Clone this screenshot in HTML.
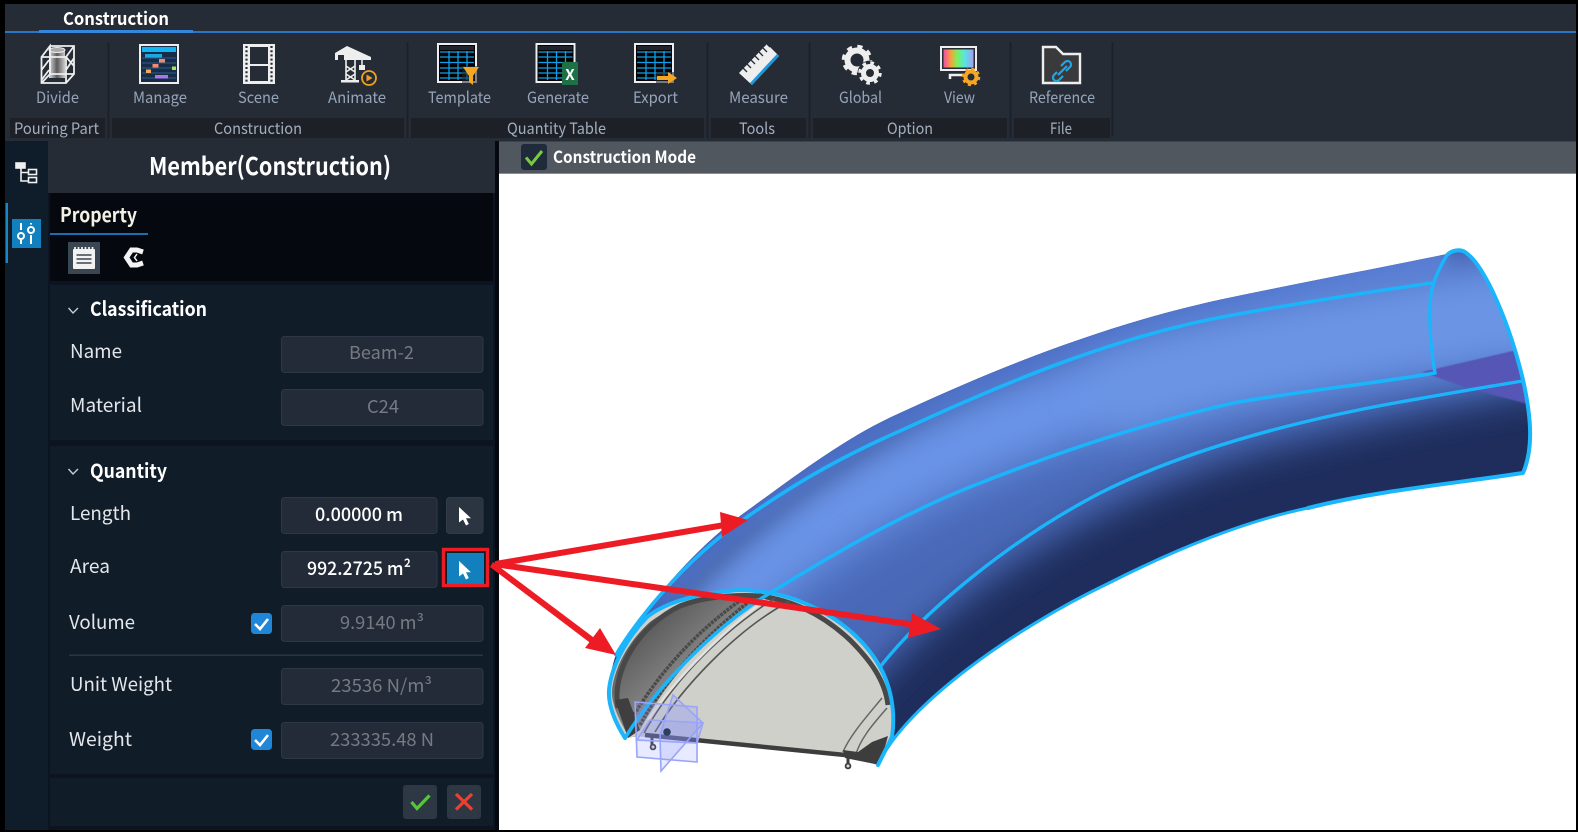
<!DOCTYPE html>
<html><head><meta charset="utf-8"><style>
html,body{margin:0;padding:0;background:#000;width:1578px;height:832px;overflow:hidden}
svg{position:absolute;left:0;top:0;filter:blur(.3px)}
text{font-family:"Noto Sans CJK JP","Liberation Sans",sans-serif}
.rb{font-size:15.5px;fill:#96a5ba;text-anchor:middle}
.gp{font-size:15.5px;fill:#a3afc0;text-anchor:middle}
.h{font-size:19.5px;font-weight:700;fill:#fff}
.l{font-size:19px;fill:#e3e6ea}
.v{font-size:18px;fill:#767b83;text-anchor:middle}
.w{font-size:18.5px;fill:#fff;text-anchor:middle;font-weight:500}
.ip{fill:#232b38;stroke:#2e3745}
.cy{fill:none;stroke:#1bb5fb;stroke-linecap:round;stroke-linejoin:round}
</style></head><body>
<svg width="1578" height="832" viewBox="0 0 1578 832" xmlns="http://www.w3.org/2000/svg">
<defs>
<linearGradient id="lg" x1="0" y1="0" x2="1" y2="1"><stop offset="0" stop-color="#3a3a3a"/><stop offset=".55" stop-color="#8a8a8a"/><stop offset="1" stop-color="#c4c4c2"/></linearGradient>
<linearGradient id="rain" x1="0" x2="1" y1="0" y2="0"><stop offset="0" stop-color="#f04fa0"/><stop offset=".25" stop-color="#f6a13c"/><stop offset=".45" stop-color="#7df05a"/><stop offset=".7" stop-color="#55e6e0"/><stop offset="1" stop-color="#a79cf5"/></linearGradient>
<linearGradient id="cyl" x1="0" x2="1" y1="0" y2="0"><stop offset="0" stop-color="#ddd"/><stop offset=".5" stop-color="#5a5a5a"/><stop offset="1" stop-color="#ccc"/></linearGradient>
<linearGradient id="topg" gradientUnits="userSpaceOnUse" x1="620" y1="0" x2="1450" y2="0"><stop offset="0" stop-color="#3a5ab0"/><stop offset="1" stop-color="#5579d0"/></linearGradient>
<filter id="b1" filterUnits="userSpaceOnUse" x="480" y="150" width="1098" height="700"><feGaussianBlur stdDeviation="18"/></filter>
<filter id="b2" filterUnits="userSpaceOnUse" x="480" y="150" width="1098" height="700"><feGaussianBlur stdDeviation="22"/></filter>
<filter id="b4" filterUnits="userSpaceOnUse" x="480" y="150" width="1098" height="700"><feGaussianBlur stdDeviation="7"/></filter>
<filter id="b3" filterUnits="userSpaceOnUse" x="1300" y="300" width="278" height="160"><feGaussianBlur stdDeviation=".6"/></filter>
<clipPath id="tube"><path d="M625 738C615 722 608 705 609 690C610 678 612 665 616 655C630 630 680 560 740 516C790 480 845 437 900 413C1010 362 1120 320 1233 297C1300 283 1380 268 1447 254C1452 250 1460 249 1465 252C1485 265 1510 325 1523 380C1532 420 1533 450 1523 473C1450 484 1375 491 1308 508C1240 522 1170 552 1107 584C1015 628 905 705 878 765L850 757L640 736Z"/></clipPath>
<g id="tbl">
<rect x="1" y="1" width="38" height="38" fill="#000" stroke="#eee" stroke-width="2"/>
<rect x="3" y="3" width="34" height="4" fill="#20242c"/>
<path d="M3 9H37M3 14H37M3 19.500H37M3 25H37M3 30H37M3 35H37M12 8V37M21 8V37M30 8V37" stroke="#0f9fe8" stroke-width="1.300" fill="none"/>
</g>
<path id="cur" d="M0 0V15.500L4 12.500L7 18.500L9.800 17L7 11.200H12Z" fill="#fff"/>
<path id="chk" d="M0 5L5 10L13 0" fill="none" stroke="#fff" stroke-width="2.600"/>
</defs>

<!-- frame -->
<rect x="5" y="4" width="1571" height="826" fill="#0b1420"/>
<!-- ribbon -->
<rect x="5" y="4" width="1571" height="137" fill="#262c36"/>
<rect x="5" y="31" width="1571" height="2" fill="#2b76c4"/>
<rect x="39" y="30" width="154" height="3" fill="#3388dd"/>
<text x="63" y="25" class="h" style="font-size:17.500px" textLength="106" lengthAdjust="spacingAndGlyphs">Construction</text>

<g fill="#1d2027">
<rect x="10" y="118" width="95" height="20"/><rect x="112" y="118" width="292" height="20"/><rect x="411" y="118" width="293" height="20"/><rect x="711" y="118" width="95" height="20"/><rect x="813" y="118" width="194" height="20"/><rect x="1014" y="118" width="96" height="20"/>
</g>
<g fill="#1c2028">
<rect x="107.500" y="42" width="2" height="96"/><rect x="406.500" y="42" width="2" height="96"/><rect x="706.500" y="42" width="2" height="96"/><rect x="808.500" y="42" width="2" height="96"/><rect x="1009.500" y="42" width="2" height="96"/><rect x="1111.500" y="42" width="2" height="94"/>
</g>

<!-- ribbon labels -->
<text x="57.500" y="103" class="rb" textLength="43" lengthAdjust="spacingAndGlyphs">Divide</text>
<text x="160" y="103" class="rb" textLength="54" lengthAdjust="spacingAndGlyphs">Manage</text>
<text x="258.500" y="103" class="rb" textLength="41" lengthAdjust="spacingAndGlyphs">Scene</text>
<text x="357" y="103" class="rb" textLength="58" lengthAdjust="spacingAndGlyphs">Animate</text>
<text x="459.500" y="103" class="rb" textLength="63" lengthAdjust="spacingAndGlyphs">Template</text>
<text x="558" y="103" class="rb" textLength="62" lengthAdjust="spacingAndGlyphs">Generate</text>
<text x="655.500" y="103" class="rb" textLength="45" lengthAdjust="spacingAndGlyphs">Export</text>
<text x="758.500" y="103" class="rb" textLength="59" lengthAdjust="spacingAndGlyphs">Measure</text>
<text x="860.500" y="103" class="rb" textLength="43" lengthAdjust="spacingAndGlyphs">Global</text>
<text x="959.500" y="103" class="rb" textLength="31" lengthAdjust="spacingAndGlyphs">View</text>
<text x="1062" y="103" class="rb" textLength="66" lengthAdjust="spacingAndGlyphs">Reference</text>
<text x="56.500" y="134" class="gp" textLength="85" lengthAdjust="spacingAndGlyphs">Pouring Part</text>
<text x="258" y="134" class="gp" textLength="88" lengthAdjust="spacingAndGlyphs">Construction</text>
<text x="556.500" y="134" class="gp" textLength="99" lengthAdjust="spacingAndGlyphs">Quantity Table</text>
<text x="757" y="134" class="gp" textLength="36" lengthAdjust="spacingAndGlyphs">Tools</text>
<text x="910" y="134" class="gp" textLength="46" lengthAdjust="spacingAndGlyphs">Option</text>
<text x="1061" y="134" class="gp" textLength="22" lengthAdjust="spacingAndGlyphs">File</text>

<!-- Divide icon -->
<g>
<rect x="49" y="50" width="16" height="28" fill="url(#cyl)"/>
<ellipse cx="57" cy="50" rx="8" ry="2.500" fill="#aaa" stroke="#eee"/>
<path d="M41.500 57L50 46H74V74L66 83H41.500ZM41.500 57H66V83M66 57L74 46M41.500 57L50 46V74H74M50 74L41.500 83M66 57L74 66M66 70L74 58M41.500 70L49 60M41.500 80L49 70" fill="none" stroke="#eee" stroke-width="1.800"/>
</g>
<!-- Manage -->
<g>
<rect x="140" y="45" width="38" height="38" fill="#192c47" stroke="#eee" stroke-width="2"/>
<rect x="142" y="47" width="34" height="5" fill="#12b4f2"/>
<path d="M142 58H176M142 63H176M142 68H176M142 73H176M142 78H176" stroke="#2c5c8a" stroke-width="1"/>
<rect x="145" y="54" width="17" height="3.500" fill="#1ba8e0"/>
<rect x="159" y="59" width="6" height="3.500" fill="#f08a70"/>
<rect x="152.500" y="64" width="6" height="3.500" fill="#f08a70"/>
<rect x="146" y="69.500" width="5" height="3.500" fill="#f3a95a"/>
<rect x="172" y="66.500" width="4" height="3.500" fill="#9ce660"/>
<rect x="155" y="75" width="13" height="3.500" fill="#a878ea"/>
</g>
<!-- Scene -->
<g>
<rect x="243" y="44" width="32" height="40" fill="#eee"/>
<rect x="250" y="47" width="18" height="17" fill="#262c36"/><rect x="250" y="66" width="18" height="15" fill="#262c36"/>
<path d="M246.500 46V83M271.500 46V83" stroke="#262c36" stroke-width="2.200" stroke-dasharray="2 2.200" fill="none"/>
</g>
<!-- Animate -->
<g fill="none" stroke="#eee">
<path d="M335 61V53L347 46L371 57V60H335Z" fill="#eee" stroke="none"/>
<path d="M338 60V55H344V60" fill="#262c36" stroke="none"/>
<path d="M346 60V81M355 60V81M346 66L355 72M355 66L346 72M346 74L355 80M355 74L346 80" stroke-width="1.600"/>
<rect x="341" y="80" width="18" height="2.500" fill="#eee" stroke="none"/>
<path d="M362 60V66" stroke-width="1.500"/><rect x="359" y="65" width="6" height="5" fill="#eee" stroke="none"/>
<circle cx="369" cy="78" r="7" stroke="#f0a020" stroke-width="1.800" fill="#262c36"/>
<path d="M366.500 74.500V81.500L372.500 78Z" fill="#f0a020" stroke="none"/>
</g>
<!-- tables -->
<use href="#tbl" x="437" y="43"/>
<rect x="462" y="66" width="16" height="19" fill="#262c36" opacity=".55"/>
<path d="M463 67H479L473 76V85L469 82V76Z" fill="#f5a623"/>
<use href="#tbl" x="535.500" y="43"/>
<rect x="562" y="62" width="16" height="23" fill="#1e7145"/>
<text x="570" y="80" text-anchor="middle" font-size="15" font-weight="700" fill="#fff">X</text>
<use href="#tbl" x="634" y="43"/>
<rect x="656" y="72" width="18" height="12" fill="#262c36" opacity=".6"/>
<path d="M657 76H668V72L677 78L668 84V80H657Z" fill="#f5a623"/>
<!-- Measure -->
<g>
<path d="M767 44L779 56L752 85L739 73Z" fill="#eee"/>
<path d="M779 56L752 85L750 83L777 54Z" fill="#1a98e0"/>
<path d="M763 48L767 52M759 52L763 56M755 56L759 60M751 60L755 64M747 64L751 68M743 68L747 72M767 44L770 47" stroke="#262c36" stroke-width="1.300"/>
</g>
<!-- Global -->
<g fill="none">
<circle cx="857" cy="60" r="9.500" stroke="#eee" stroke-width="6"/>
<circle cx="857" cy="60" r="13" stroke="#eee" stroke-width="4.500" stroke-dasharray="5 5.200"/>
<circle cx="870" cy="73" r="12.500" fill="#262c36"/>
<circle cx="870" cy="73" r="6.500" stroke="#eee" stroke-width="5"/>
<circle cx="870" cy="73" r="10" stroke="#eee" stroke-width="3.500" stroke-dasharray="3.600 4.250"/>
</g>
<!-- View -->
<g>
<rect x="941" y="47" width="35" height="23" fill="#262c36" stroke="#eee" stroke-width="2"/>
<rect x="943.500" y="49.500" width="30" height="18" fill="url(#rain)"/>
<path d="M950 79V75H964" fill="none" stroke="#eee" stroke-width="2.500"/>
<circle cx="971" cy="77" r="5.500" fill="none" stroke="#f5a623" stroke-width="4"/>
<circle cx="971" cy="77" r="8" fill="none" stroke="#f5a623" stroke-width="2.500" stroke-dasharray="3 3.300"/>
</g>
<!-- Reference -->
<g>
<path d="M1043 47H1056L1063 54H1080V83H1043Z" fill="#3a3a3c" stroke="#eee" stroke-width="2.400"/>
<path d="M1057 72L1054 75A3.500 3.500 0 0 0 1059 80L1063 76M1061 66L1065 62A3.500 3.500 0 0 1 1070 67L1066 71M1058 75L1067 66" fill="none" stroke="#1ba8ea" stroke-width="2.200"/>
</g>

<!-- left rail -->
<rect x="5" y="141" width="43" height="689" fill="#0f1c29"/>
<g fill="none" stroke="#f0f0f0" stroke-width="1.600">
<rect x="16" y="163" width="9" height="5" fill="#f0f0f0"/>
<path d="M21 168V181H28M21 172.500H28"/>
<rect x="28.500" y="169.500" width="8" height="5"/><rect x="28.500" y="177.500" width="8" height="5"/>
</g>
<rect x="5.500" y="203" width="2.500" height="60" fill="#1a86c7"/>
<rect x="12" y="219" width="29" height="29" fill="#1280bd"/>
<g fill="none" stroke="#fff" stroke-width="2">
<path d="M21 223V230M21 240V244M31 223V224.500M31 235V244"/>
<circle cx="21" cy="236" r="3"/><circle cx="31" cy="230" r="3"/>
</g>

<!-- panel header -->
<rect x="48" y="141" width="447" height="52" fill="#262c36"/>
<text x="149" y="175" class="h" style="font-size:24.500px" textLength="242" lengthAdjust="spacingAndGlyphs">Member(Construction)</text>
<rect x="48" y="193" width="451" height="637" fill="#0b1420"/>
<rect x="495" y="141" width="4" height="689" fill="#05090f"/>
<rect x="50" y="193" width="443" height="88" fill="#05090f"/>
<text x="60" y="222" class="h" style="font-size:20px;fill:#f4f0e4" textLength="77" lengthAdjust="spacingAndGlyphs">Property</text>
<rect x="50" y="233" width="98" height="2" fill="#1a6fb0"/>
<rect x="68" y="242" width="32" height="32" fill="#3a4652"/>
<rect x="73" y="249" width="22" height="20" rx="1" fill="#f2f2f2"/>
<path d="M75 247V250M78.500 247V250M82 247V250M85.500 247V250M89 247V250M92.500 247V250" stroke="#f2f2f2" stroke-width="1.700"/>
<path d="M76.500 255H91.500M76.500 259H91.500M76.500 263H91.500" stroke="#3a4652" stroke-width="1.600"/>
<path d="M143 252L137 250H131.500L126.500 257.500L131.500 265H137L143 263" fill="none" stroke="#f4f4f4" stroke-width="5"/>
<path d="M137 254L134.500 257.500L137 261" fill="none" stroke="#f4f4f4" stroke-width="1.500"/>

<!-- Classification -->
<rect x="50" y="285" width="443" height="155" fill="#111c29"/>
<path d="M68.500 308L73 313L78 308" fill="none" stroke="#c8ccd2" stroke-width="1.400"/>
<text x="90" y="316" class="h" textLength="117" lengthAdjust="spacingAndGlyphs">Classification</text>
<text x="70" y="358" class="l" textLength="52" lengthAdjust="spacingAndGlyphs">Name</text>
<rect x="281.500" y="336.500" width="201.500" height="36" rx="3" class="ip"/>
<text x="381.500" y="359" class="v" textLength="65" lengthAdjust="spacingAndGlyphs">Beam-2</text>
<text x="70" y="412" class="l" textLength="72" lengthAdjust="spacingAndGlyphs">Material</text>
<rect x="281.500" y="389.500" width="201.500" height="36" rx="3" class="ip"/>
<text x="383" y="413" class="v" textLength="32" lengthAdjust="spacingAndGlyphs">C24</text>

<!-- Quantity -->
<rect x="50" y="446" width="443" height="328" fill="#111c29"/>
<path d="M68.500 469L73 474L78 469" fill="none" stroke="#c8ccd2" stroke-width="1.400"/>
<text x="90" y="478" class="h" textLength="77" lengthAdjust="spacingAndGlyphs">Quantity</text>
<text x="70" y="520" class="l" textLength="61" lengthAdjust="spacingAndGlyphs">Length</text>
<rect x="281.500" y="497.500" width="155.500" height="36" rx="3" class="ip"/>
<text x="359" y="521" class="w" textLength="88" lengthAdjust="spacingAndGlyphs">0.00000 m</text>
<rect x="446.500" y="497.500" width="36.500" height="36" rx="3" fill="#2b3441" stroke="#323b48"/>
<use href="#cur" x="459" y="507"/>
<text x="70" y="573" class="l" textLength="40" lengthAdjust="spacingAndGlyphs">Area</text>
<rect x="281.500" y="551.500" width="155.500" height="36" rx="3" class="ip"/>
<text x="359" y="575" class="w" textLength="104" lengthAdjust="spacingAndGlyphs">992.2725 m²</text>
<rect x="447" y="553" width="37" height="31" fill="#1280bd"/>
<use href="#cur" x="459" y="561"/>
<text x="69" y="629" class="l" textLength="66" lengthAdjust="spacingAndGlyphs">Volume</text>
<rect x="251" y="613" width="21" height="21" rx="3.500" fill="#1f86d8"/>
<use href="#chk" x="255" y="619"/>
<rect x="281.500" y="605.500" width="201.500" height="36" rx="3" class="ip"/>
<text x="382" y="629" class="v" textLength="84" lengthAdjust="spacingAndGlyphs">9.9140 m³</text>
<rect x="69" y="654.500" width="414" height="1.500" fill="#2b3645"/>
<text x="70" y="691" class="l" textLength="102" lengthAdjust="spacingAndGlyphs">Unit Weight</text>
<rect x="281.500" y="668.500" width="201.500" height="36" rx="3" class="ip"/>
<text x="381.500" y="692" class="v" textLength="101" lengthAdjust="spacingAndGlyphs">23536 N/m³</text>
<text x="69" y="746" class="l" textLength="63" lengthAdjust="spacingAndGlyphs">Weight</text>
<rect x="251" y="729" width="21" height="21" rx="3.500" fill="#1f86d8"/>
<use href="#chk" x="255" y="735"/>
<rect x="281.500" y="722.500" width="201.500" height="36" rx="3" class="ip"/>
<text x="382" y="746" class="v" textLength="104" lengthAdjust="spacingAndGlyphs">233335.48 N</text>

<!-- footer -->
<rect x="50" y="778" width="443" height="48" fill="#111c29"/>
<rect x="403" y="785" width="34" height="34" rx="3" fill="#2e3845"/>
<path d="M411.500 802L417 808.500L429.500 795.500" fill="none" stroke="#55c838" stroke-width="3.200"/>
<rect x="447" y="785" width="34" height="34" rx="3" fill="#2e3845"/>
<path d="M456 794L472 809.500M472 794L456 809.500" fill="none" stroke="#ee4030" stroke-width="3.200"/>

<!-- viewport -->
<rect x="499" y="141" width="1077" height="33" fill="#50575f"/>
<rect x="499" y="141" width="1077" height="1" fill="#3d434b"/>
<rect x="499" y="173" width="1077" height="1" fill="#8a8e94"/>
<rect x="499" y="174" width="1077" height="656" fill="#fff"/>
<rect x="521" y="144" width="26" height="26" rx="3" fill="#1f2a3a"/>
<path d="M526 157.500L531.500 164L542 151" fill="none" stroke="#7ac943" stroke-width="3"/>
<text x="553" y="163" class="h" style="font-size:16.500px" textLength="143" lengthAdjust="spacingAndGlyphs">Construction Mode</text>

<!-- tube -->
<g clip-path="url(#tube)">
<rect x="600" y="240" width="940" height="540" fill="#1e2d5c"/>
<path d="M690 800C770 630 950 455 1233 370C1350 340 1450 320 1560 300" fill="none" stroke="#4a69b8" stroke-width="170" filter="url(#b1)"/>
<path d="M616 655C630 630 680 560 740 516C790 480 845 437 900 413C1010 362 1120 320 1233 297C1300 283 1380 268 1447 254" fill="none" stroke="url(#topg)" stroke-width="34" filter="url(#b4)"/>
<path d="M690 640C780 530 930 450 1067 405C1200 362 1350 335 1560 310" fill="none" stroke="#6c96ea" stroke-width="75" filter="url(#b2)"/>
<path d="M1100 400C1250 350 1400 325 1560 305" fill="none" stroke="#6c94e4" stroke-width="70" filter="url(#b2)"/>
<path d="M1422 372L1517 350L1528 404L1467 388Z" fill="#5557b5" filter="url(#b3)"/>
</g>

<!-- near-end interior -->
<path d="M625 738C615 722 608 705 609 690C611 668 625 640 647 617C665 603 690 595 737 590C770 590 795 598 813 607C845 622 868 645 880 667C890 685 896 710 892 737L878 765L850 757L640 736Z" fill="#cfd0ca"/>
<path d="M628 735C616 715 611 700 612 690C615 665 630 640 650 622C670 607 700 598 735 594C745 594 755 595 765 597C720 620 670 675 640 730Z" fill="url(#lg)"/>
<path d="M632 718C655 680 690 635 745 597M640 725C665 680 705 635 755 597" fill="none" stroke="#4a4a4a" stroke-width="3.500" stroke-dasharray="3 1"/>
<path d="M618 708C611 670 640 625 680 606C700 598 730 594 760 596C790 600 820 612 850 640C870 660 885 680 888 705" fill="none" stroke="#484848" stroke-width="5"/>
<path d="M644 733C668 690 710 640 775 598M655 732C680 690 735 630 790 601" fill="none" stroke="#555" stroke-width="1.600"/>
<path d="M648 720C672 684 712 640 765 600" fill="none" stroke="#e2e2de" stroke-width="2.500"/>
<path d="M843 752C850 735 868 715 882 698M855 757C860 738 875 722 887 708" fill="none" stroke="#666" stroke-width="1.500"/>
<path d="M645 735L845 755" fill="none" stroke="#3d3d3d" stroke-width="4.500"/>
<path d="M843 750L858 752L872 742L888 736L880 765L845 758Z" fill="#3d3d3d"/>
<path d="M615 700L628 698L640 730L628 738Z" fill="#3f3f3f"/>
<path d="M652 735V745M848 757V764" stroke="#3d3d3d" stroke-width="3"/>
<circle cx="653" cy="747" r="2.400" fill="#ddd" stroke="#3d3d3d" stroke-width="1.800"/>
<circle cx="848" cy="766" r="2.400" fill="#ddd" stroke="#3d3d3d" stroke-width="1.800"/>

<!-- cyan edges -->
<path class="cy" stroke-width="4" d="M625 738C615 722 608 705 609 690C611 668 625 640 647 617C665 603 690 595 737 590C770 590 795 598 813 607C845 622 868 645 880 667C890 685 896 710 892 737L878 765"/>
<path class="cy" stroke-width="3.600" d="M616 655C630 630 680 562 747 517C800 480 845 455 900 431C1010 380 1120 335 1233 315C1300 303 1370 292 1432 283"/>
<path class="cy" stroke-width="3.600" d="M625 738C655 690 710 630 770 593C830 556 900 515 970 487C1055 453 1145 423 1233 403C1300 391 1370 384 1435 373"/>
<path class="cy" stroke-width="3.400" d="M880 667C925 610 1010 540 1100 493C1190 448 1300 420 1400 402C1440 395 1485 387 1523 381"/>
<path class="cy" stroke-width="3.400" d="M1447 255C1435 275 1430 290 1430 307C1429 330 1432 355 1435 373"/>
<path class="cy" stroke-width="4" d="M1447 255C1452 250 1460 249 1465 252C1485 265 1510 325 1523 380C1532 420 1533 450 1523 473C1450 484 1375 491 1308 508"/>
<path class="cy" stroke-width="3" d="M878 765C905 705 1015 628 1107 584C1170 552 1240 522 1308 508"/>

<!-- gizmo -->
<g fill="#8c94ff" fill-opacity=".2" stroke="#9aa4f8" stroke-width="1.600">
<path d="M635 702L697 707V762L637 757Z"/>
<path d="M673 695L703 723L661 771L660 735Z"/>
<path d="M650 720L703 723L697 743L637 740Z"/>
</g>
<circle cx="667" cy="732" r="3.800" fill="#2c3f60"/>

<!-- arrows -->
<g fill="#ed1c24" stroke="none">
<path d="M495 561L724 522L725 528L496 567Z"/>
<path d="M720 512L748 520L722 537Z"/>
<path d="M495 561L916 622L915 628L494 567Z"/>
<path d="M912 613L941 629L908 638Z"/>
<path d="M493 562L597 640L593 645L490 567Z"/>
<path d="M600 628L616 655L585 648Z"/>
</g>
<rect x="443.500" y="549.500" width="44" height="36" fill="none" stroke="#ed1c24" stroke-width="3.400"/>
</svg>
</body></html>
